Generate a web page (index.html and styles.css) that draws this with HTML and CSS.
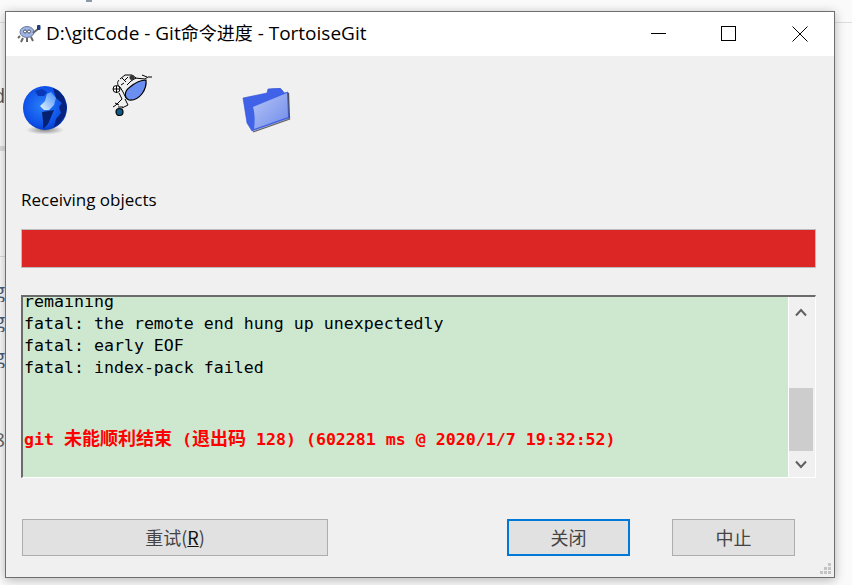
FILE: index.html
```html
<!DOCTYPE html>
<html lang="zh-CN">
  <head>
    <meta charset="UTF-8" />
    <meta name="viewport" content="width=device-width, initial-scale=1.0" />
    <title>Git命令进度 - TortoiseGit</title>
    <link rel="stylesheet" href="styles.css">
  </head>
  <body>
    <!-- 背后的页面露出来的部分 -->
    <div class="behind">
      <span class="behind-line line-a"></span>
      <span class="behind-line line-b"></span>
      <span class="behind-line line-c"></span>
      <span class="behind-line line-d"></span>
      <span class="behind-text text-a">d</span>
      <span class="behind-text text-b">g</span>
      <span class="behind-text text-c">g</span>
      <span class="behind-text text-d">g</span>
      <span class="behind-text text-e">8</span>
      <span class="behind-dot"></span>
    </div>

    <div class="window">
      <div class="titlebar">
        <svg class="app-icon" width="24" height="18" viewBox="0 0 24 18">
          <ellipse cx="10" cy="7" rx="7" ry="5.500" fill="#9db4e4" stroke="#6c7a98" stroke-width="1" />
          <circle cx="8" cy="6.500" r="1.500" fill="#fff" stroke="#334" stroke-width=".8" />
          <circle cx="12" cy="6.500" r="1.500" fill="#fff" stroke="#334" stroke-width=".8" />
          <path d="M16 8 21 4M3 11 1 13M6 13 4 17M10 13v4M14 12l2 4" stroke="#666" stroke-width="2" fill="none" />
          <rect x="20" y="0" width="3.500" height="5" rx="1" fill="#223a80" />
        </svg>
        <div class="title">D:\gitCode - Git<span class="title-cjk">命令进度</span> - TortoiseGit</div>
        <div class="controls">
          <svg width="16" height="16" viewBox="0 0 16 16"><path d="M1 7.500h15" stroke="#000" fill="none" /></svg>
          <svg width="16" height="16" viewBox="0 0 16 16"><rect x=".5" y=".5" width="14" height="14" stroke="#000" fill="none" /></svg>
          <svg width="16" height="16" viewBox="0 0 16 16"><path d="M.5.5l15 15M15.500.5l-15 15" stroke="#000" fill="none" /></svg>
        </div>
      </div>

      <div class="content">
        <div class="anim-row">
          <svg class="globe" width="46" height="50" viewBox="0 0 46 50">
            <defs>
              <radialGradient id="globeFill" cx="45%" cy="45%" r="60%">
                <stop offset="0" stop-color="#2a80f8" />
                <stop offset=".75" stop-color="#0d4fe8" />
                <stop offset="1" stop-color="#0733b0" />
              </radialGradient>
              <radialGradient id="globeShade" cx="50%" cy="50%" r="50%">
                <stop offset="0" stop-color="#8a8a8a" />
                <stop offset="1" stop-color="#efefef" />
              </radialGradient>
              <linearGradient id="globeLight" x1="0" y1="1" x2="1" y2="0">
                <stop offset="0" stop-color="#e8f4ff" />
                <stop offset="1" stop-color="#3f8cf8" />
              </linearGradient>
            </defs>
            <ellipse cx="22" cy="44" rx="19" ry="4.500" fill="url(#globeShade)" />
            <circle cx="22" cy="22" r="22" fill="url(#globeFill)" />
            <path d="M30 2 36 5 41 11 44 21 42 30 36 38 31 41 33 33 38 27 36 21 39 17 33 12Z" fill="#08237e" />
            <path d="M12 5 19 3 24 6 21 10 15 10Z" fill="#0a36b8" />
            <path d="M17 20 22 15 24 8 28 6 33 12 31 19 26 24 21 24Z" fill="url(#globeLight)" />
            <path d="M19 26 31 24 28 31 25 38 20 43 20 35Z" fill="#06216f" />
          </svg>

          <svg class="figure" width="42" height="44" viewBox="0 0 42 44">
            <path d="M18 13C24 8 30 6 34 6 35 15 28 27 17 26 12 24 12 17 18 13Z" fill="#6b8ff0" stroke="#000" stroke-width="1.200" />
            <path d="M23 4 33 5 36 3 40 3M30 1 35 3M8 5 13 1 20 1 24 4 19 7 15 11M7 6C5 8 5 11 8 13M10 4 14 8M12 9 9 11M16 3 13 6" stroke="#000" stroke-width="1" fill="none" />
            <circle cx="20" cy="3.500" r="2.500" fill="#333" />
            <circle cx="4.500" cy="15" r="3.500" fill="#fff" stroke="#000" stroke-width="1" />
            <path d="M1 15H8M4.500 12v7M8 13 11 18 14 24M7 19 10 25 4 31 1 33M6 33H11M13 25 16 31 10 34M3 29 7 31" stroke="#000" stroke-width="1" fill="none" />
            <circle cx="7.500" cy="38" r="3.500" fill="#0d5a8e" stroke="#000" stroke-width="1.200" />
          </svg>

          <svg class="folder" width="50" height="46" viewBox="0 0 50 46">
            <defs>
              <linearGradient id="folderFront" x1="0" y1="0" x2="1" y2="1">
                <stop offset="0" stop-color="#b6c4f4" />
                <stop offset="1" stop-color="#6f8cec" />
              </linearGradient>
            </defs>
            <path d="M1 10 25 5 26 1 38 0 41 3 42 5 46 4 47 30 10 43 5 35Z" fill="#3f62e8" stroke="#3252d0" stroke-width=".6" />
            <path d="M11 19 45 5 46 29 12 41C13 33 13 26 11 19Z" fill="url(#folderFront)" />
            <path d="M46.500 5 47.500 31 11 44" stroke="#333" stroke-width="1.300" fill="none" opacity=".75" />
          </svg>
        </div>

        <div class="status">Receiving objects</div>
        <div class="progress"></div>

        <div class="log-box">
          <div class="log-text">
            <div class="log-line">remaining</div>
            <div class="log-line">fatal: the remote end hung up unexpectedly</div>
            <div class="log-line">fatal: early EOF</div>
            <div class="log-line">fatal: index-pack failed</div>
            <div class="log-line"></div>
            <div class="log-line"></div>
            <div class="log-line error">git <span class="cjk">未能顺利结束</span> (<span class="cjk">退出码</span> 128) (602281 ms @ 2020/1/7 19:32:52)</div>
          </div>
          <div class="scrollbar">
            <svg class="arrow arrow-up" width="12" height="9" viewBox="0 0 12 9"><path d="M1 7.500 6 2l5 5.500" stroke="#606060" stroke-width="2" fill="none" /></svg>
            <div class="track"><div class="thumb"></div></div>
            <svg class="arrow arrow-down" width="12" height="9" viewBox="0 0 12 9"><path d="M1 1.500 6 7l5-5.500" stroke="#606060" stroke-width="2" fill="none" /></svg>
          </div>
        </div>

        <div class="buttons">
          <button class="btn btn-retry">重试(<u>R</u>)</button>
          <button class="btn btn-close">关闭</button>
          <button class="btn btn-stop">中止</button>
        </div>
      </div>
      <svg class="grip" width="12" height="12" viewBox="0 0 12 12" fill="#c4c4c4">
        <rect x="8" y="0" width="3" height="3" />
        <rect x="4" y="4" width="3" height="3" /><rect x="8" y="4" width="3" height="3" />
        <rect x="0" y="8" width="3" height="3" /><rect x="4" y="8" width="3" height="3" /><rect x="8" y="8" width="3" height="3" />
      </svg>
    </div>
  </body>
</html>
```

FILE: styles.css
```css
* {
  margin: 0;
  padding: 0;
  box-sizing: border-box;
}

html,
body {
  height: 585px;
  overflow: hidden;
}

body {
  background: #fafafa;
  padding: 11px 0 0 5px;
  font-family: "Open Sans", "Noto Sans CJK SC", sans-serif;
}

/* 背后的页面 */
.behind-line {
  position: absolute;
  background: #dedede;
  height: 1px;
}

.line-a {
  left: 834px;
  right: 0;
  top: 22px;
}

.line-b {
  left: 0;
  width: 5px;
  top: 22px;
}

.line-c {
  left: 0;
  width: 5px;
  height: 5px;
  top: 146px;
}

.line-d {
  left: 0;
  width: 5px;
  top: 256px;
}

.behind-text {
  position: absolute;
  left: -7px;
  width: 12px;
  overflow: hidden;
  font-size: 20px;
  line-height: 22px;
  text-align: right;
  color: #4a6078;
}

.text-a {
  top: 85px;
  color: #555;
}

.text-b {
  top: 280px;
}

.text-c {
  top: 310px;
}

.text-d {
  top: 346px;
}

.text-e {
  top: 429px;
  color: #666;
}

.behind-dot {
  position: absolute;
  left: 86px;
  top: 0;
  width: 6px;
  height: 2px;
  background: #8a98a8;
}

/* 窗口 */
.window {
  position: relative;
  width: 830px;
  height: 567px;
  background: #f0f0f0;
  border: 1px solid #6e6e6e;
  box-shadow: 0 2px 10px rgba(0, 0, 0, 0.28);
}

.titlebar {
  display: flex;
  align-items: center;
  height: 44px;
  background: #fff;
  padding-left: 11px;
}

.app-icon {
  flex: none;
  margin-right: 5px;
}

.title {
  flex: 1;
  font-size: 19px;
  color: #000;
  white-space: nowrap;
  padding-bottom: 3px;
}

.title-cjk {
  font-size: 18px;
}

.controls {
  display: flex;
  gap: 55px;
  padding-right: 26px;
}

.content {
  padding: 18px 18px 0 15px;
}

.anim-row {
  display: flex;
  align-items: flex-start;
  height: 110px;
  padding-left: 2px;
}

.globe {
  margin-top: 12px;
}

.figure {
  margin: 0 0 0 43px;
}

.folder {
  margin: 14px 0 0 88px;
}

.status {
  font-size: 17px;
  line-height: 22px;
  height: 40px;
  margin-top: 5px;
  color: #000;
}

.progress {
  height: 39px;
  background: #dc2626;
  border: 1px solid #bcbcbc;
}

.log-box {
  display: flex;
  height: 183px;
  margin-top: 27px;
  background: #f0f0f0;
  border: 1px solid #fff;
  border-top: 2px solid #6b6b6b;
  border-left: 2px solid #6b6b6b;
  overflow: hidden;
}

.log-text {
  flex: 1;
  overflow: hidden;
  background: #cde8cf;
  padding-left: 1px;
  font-family: "DejaVu Sans Mono", "Noto Sans CJK SC", monospace;
  font-size: 16.6px;
  line-height: 22px;
  color: #000;
}

.log-line {
  height: 22px;
  white-space: pre;
}

/* 第一行被上边缘裁掉 */
.log-line:first-child {
  margin-top: -6px;
}

.error {
  margin-top: 5px;
  color: #f00;
  font-weight: bold;
}

.cjk {
  font-size: 18px;
}

.scrollbar {
  flex: none;
  width: 27px;
  display: flex;
  flex-direction: column;
  align-items: center;
  border-left: 1px solid #fff;
  padding: 0 2px 3px 0;
}

.arrow {
  flex: none;
  margin-bottom: 5px;
}

.arrow-up {
  margin-top: 11px;
}

.arrow-down {
  margin-top: 9px;
}

.track {
  flex: 1;
  width: 24px;
  display: flex;
  flex-direction: column;
  justify-content: flex-end;
}

.thumb {
  height: 63px;
  background: #cdcdcd;
}

.buttons {
  display: flex;
  margin-top: 41px;
  padding-left: 1px;
}

.btn {
  height: 37px;
  padding-bottom: 2px;
  background: #e1e1e1;
  border: 1px solid #adadad;
  font-family: "Noto Sans CJK SC", sans-serif;
  font-size: 18px;
  color: #444;
}

.btn u {
  color: #111;
}

.btn-retry {
  width: 306px;
}

.btn-close {
  width: 123px;
  margin-left: 179px;
  border: 2px solid #0078d7;
}

.btn-stop {
  width: 123px;
  margin-left: 42px;
}

.grip {
  position: absolute;
  right: 2px;
  bottom: 2px;
}
```
